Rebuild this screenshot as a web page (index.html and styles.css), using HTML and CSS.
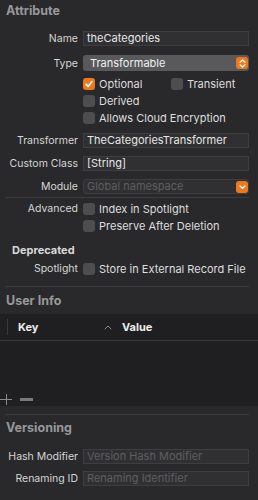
FILE: index.html
```html
<!DOCTYPE html>
<html lang="en">
  <head>
    <meta charset="UTF-8" />
    <meta name="viewport" content="width=device-width, initial-scale=1" />
    <title>Attribute Inspector</title>
    <link rel="stylesheet" href="styles.css">
  </head>
  <body>
    <section class="attribute">
      <h2 class="section-title">Attribute</h2>

      <div class="row field-row first">
        <label>Name</label>
        <div class="field">theCategories</div>
      </div>

      <div class="row popup-row">
        <label>Type</label>
        <div class="popup">
          <span>Transformable</span>
          <span class="popup-btn">
            <svg width="7" height="9" viewBox="0 0 7 9"><path d="M1 3.3 L3.5 1 L6 3.3 M1 5.7 L3.5 8 L6 5.7" fill="none" stroke="#fff" stroke-width="1.2" stroke-linecap="round" stroke-linejoin="round"/></svg>
          </span>
        </div>
      </div>

      <div class="row check-row">
        <label></label>
        <div class="checks">
          <span class="check-item"><span class="box checked">
            <svg width="10" height="10" viewBox="0 0 10 10"><path d="M2 5.2 L4.1 7.4 L8 2.6" fill="none" stroke="#fff" stroke-width="1.6" stroke-linecap="round" stroke-linejoin="round"/></svg>
          </span>Optional</span>
          <span class="check-item second"><span class="box"></span>Transient</span>
        </div>
      </div>
      <div class="row check-row">
        <label></label>
        <span class="check-item"><span class="box"></span>Derived</span>
      </div>
      <div class="row check-row">
        <label></label>
        <span class="check-item"><span class="box"></span>Allows Cloud Encryption</span>
      </div>

      <div class="row field-row gap7">
        <label>Transformer</label>
        <div class="field">TheCategoriesTransformer</div>
      </div>
      <div class="row field-row">
        <label>Custom Class</label>
        <div class="field">[String]</div>
      </div>
      <div class="row field-row">
        <label>Module</label>
        <div class="field combo">
          <span class="placeholder">Global namespace</span>
          <span class="popup-btn">
            <svg width="7" height="6" viewBox="0 0 7 6"><path d="M1 2 L3.5 4.3 L6 2" fill="none" stroke="#fff" stroke-width="1.3" stroke-linecap="round" stroke-linejoin="round"/></svg>
          </span>
        </div>
      </div>

      <hr class="sep sep-module">

      <div class="row check-row">
        <label>Advanced</label>
        <span class="check-item"><span class="box"></span>Index in Spotlight</span>
      </div>
      <div class="row check-row">
        <label></label>
        <span class="check-item"><span class="box"></span>Preserve After Deletion</span>
      </div>

      <h3 class="sub-title">Deprecated</h3>
      <div class="row check-row">
        <label>Spotlight</label>
        <span class="check-item"><span class="box"></span>Store in External Record File</span>
      </div>

      <hr class="sep sep-spot">
    </section>

    <section class="user-info">
      <h2 class="section-title">User Info</h2>
      <div class="table">
        <div class="table-head">
          <span class="col-key">Key</span>
          <span class="sort">
            <svg width="8" height="5" viewBox="0 0 8 5"><path d="M1 4 L4 1 L7 4" fill="none" stroke="#8a8a8c" stroke-width="1" stroke-linecap="round"/></svg>
          </span>
          <span class="col-value">Value</span>
        </div>
        <div class="table-body"></div>
        <div class="table-tools">
          <span class="plus"></span>
          <span class="minus"></span>
        </div>
      </div>
      <hr class="sep sep-user">
    </section>

    <section class="versioning">
      <h2 class="section-title">Versioning</h2>
      <div class="row field-row first-v">
        <label>Hash Modifier</label>
        <div class="field"><span class="placeholder">Version Hash Modifier</span></div>
      </div>
      <div class="row field-row gap7">
        <label>Renaming ID</label>
        <div class="field"><span class="placeholder">Renaming Identifier</span></div>
      </div>
    </section>
  </body>
</html>
```

FILE: styles.css
```css
body {
  margin: 0;
  padding: 0;
  width: 258px;
  height: 500px;
  overflow: hidden;
  background: #29292b;
  color: #dcdcdc;
  font-family: "Inter", "Noto Sans", sans-serif;
  font-size: 11px;
}

.section-title {
  margin: 0;
  padding: 3px 0 0 6px;
  height: 19px;
  line-height: 15px;
  font-size: 12.5px;
  font-weight: 700;
  color: #98989a;
}

.row {
  display: grid;
  grid-template-columns: 78px 1fr;
  column-gap: 5px;
  align-items: center;
  padding-right: 9px;
}

.row label {
  text-align: right;
  font-size: 10.5px;
  color: #d6d6d6;
  white-space: nowrap;
}

.field-row {
  height: 15px;
  margin-top: 8px;
}

.field-row.first {
  margin-top: 9px;
}

.field-row.gap7 {
  margin-top: 7px;
}

.field {
  height: 15px;
  box-sizing: border-box;
  border: 1px solid #3e3e40;
  background: #303032;
  color: #e6e6e6;
  padding: 0 3px;
  line-height: 13px;
  white-space: nowrap;
  overflow: hidden;
}

.placeholder {
  color: #5e5e60;
}

.combo {
  display: flex;
  align-items: center;
  justify-content: space-between;
  padding-right: 0;
  border-radius: 3px;
  overflow: visible;
}

.popup-row {
  height: 16px;
  margin-top: 9px;
}

.popup {
  height: 16px;
  box-sizing: border-box;
  background: #59595b;
  border-radius: 3px;
  color: #f0f0f0;
  padding: 0 1px 0 7px;
  display: flex;
  align-items: center;
  justify-content: space-between;
}

.popup-btn {
  width: 12px;
  height: 12px;
  border-radius: 3px;
  background: #ec7a1d;
  display: flex;
  align-items: center;
  justify-content: center;
}

.check-row {
  height: 17px;
}

.popup-row + .check-row {
  margin-top: 4px;
}

.field-row + .check-row,
.sep + .check-row {
  margin-top: 2px;
}

.checks {
  display: flex;
}

.check-item {
  display: flex;
  align-items: center;
  gap: 4px;
  color: #dedede;
  white-space: nowrap;
}

.check-item.second {
  margin-left: auto;
  width: 78px;
}

.box {
  width: 12px;
  height: 12px;
  border-radius: 3px;
  background: #4d4d4f;
  display: flex;
  align-items: center;
  justify-content: center;
}

.box.checked {
  background: #ec7a1d;
}

.sep {
  border: 0;
  height: 1px;
  background: #3c3c3e;
  margin: 0 9px 0 6px;
}

.sep-module {
  margin-top: 3px;
}

.sub-title {
  margin: 8px 0 0 12px;
  height: 16px;
  line-height: 16px;
  font-size: 11px;
  font-weight: 700;
  color: #d8d8d8;
}

.sub-title + .row {
  margin-top: 2px;
}

.sep-spot {
  margin-top: 9px;
}

.user-info .section-title {
  padding-top: 6px;
  height: 15px;
}

.table {
  margin-top: 6px;
  background: #1f1f21;
  height: 92px;
  display: flex;
  flex-direction: column;
}

.table-head {
  height: 26px;
  display: flex;
  align-items: center;
  border-bottom: 1px solid #38383a;
  font-weight: 700;
  color: #ececec;
  position: relative;
}

.table-head::before {
  content: "";
  position: absolute;
  left: 7px;
  top: 5px;
  width: 1px;
  height: 16px;
  background: #3a3a3c;
}

.col-key {
  margin-left: 18px;
  width: 86px;
}

.sort {
  width: 18px;
  display: flex;
}

.table-body {
  flex: 1;
}

.table-tools {
  height: 14px;
  display: flex;
  align-items: center;
  gap: 8px;
}

.plus {
  width: 12px;
  height: 11px;
  background:
    linear-gradient(#8a8a8c, #8a8a8c) center / 12px 1px no-repeat,
    linear-gradient(#8a8a8c, #8a8a8c) center / 1px 11px no-repeat;
}

.minus {
  width: 13px;
  height: 3px;
  background: #7a7a7c;
}

.sep-user {
  margin-top: 8px;
}

.versioning .section-title {
  padding-top: 5px;
  height: 17px;
}

.field-row.first-v {
  margin-top: 12px;
}
```
